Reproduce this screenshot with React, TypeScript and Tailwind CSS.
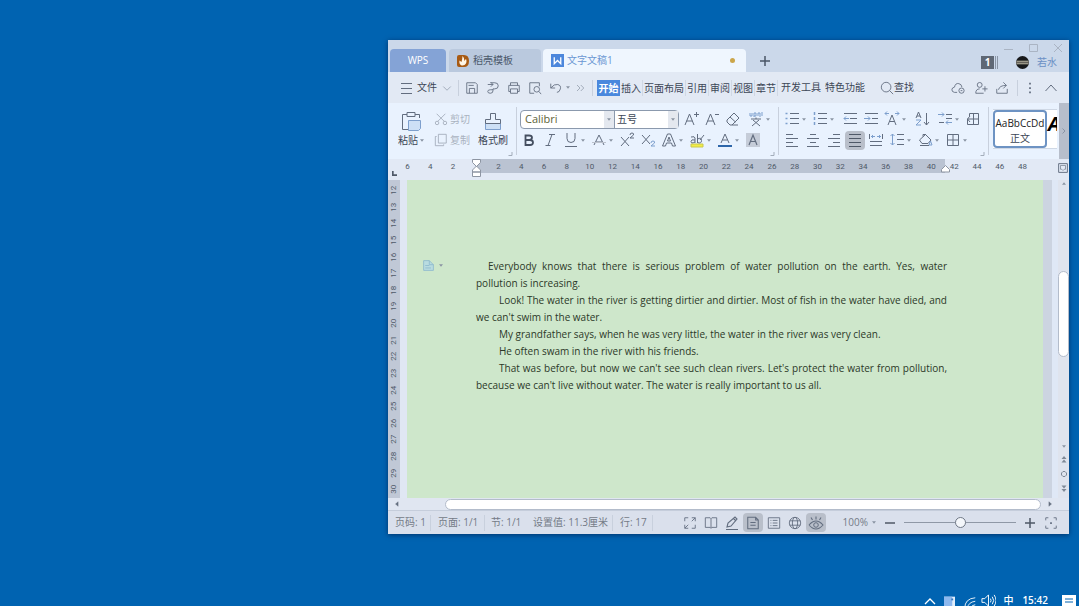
import type { ReactNode } from "react";

function Icon({ children, size = "size-4", tone = "text-[#626d7f]" }: { children: ReactNode; size?: string; tone?: string }) {
  return (
    <svg viewBox="0 0 16 16" className={`${size} ${tone} shrink-0`} fill="none" stroke="currentColor" strokeWidth="1" aria-hidden="true">
      {children}
    </svg>
  );
}

function Caret() {
  return (
    <svg viewBox="0 0 6 4" className="h-[3px] w-1 shrink-0 text-[#8a94a3]" fill="currentColor" aria-hidden="true">
      <path d="M0 0h6L3 4z" />
    </svg>
  );
}

function Tool({ label, children, menu = false, active = false }: { label: string; children: ReactNode; menu?: boolean; active?: boolean }) {
  return (
    <button type="button" aria-label={label} className={menu ? "flex h-5 w-7 shrink-0 items-center" : "flex h-5 w-[21px] shrink-0 items-center"}>
      <span className={active ? "flex h-[19px] w-5 items-center justify-center rounded-sm bg-[#b9bfca]" : "flex h-5 w-5 items-center justify-center"}>
        {children}
      </span>
      {menu && <Caret />}
    </button>
  );
}

function Divider({ tall = "h-4" }: { tall?: string }) {
  return <span className={`${tall} w-px shrink-0 bg-[#c8d0dd]`} />;
}

const blue = "#7d9fcd";

function TitleBar() {
  return (
    <header className="flex h-8 items-end bg-[#cbd8ea] pl-0.5">
      <nav className="flex min-w-0 items-end" aria-label="标签">
        <button type="button" className="h-[23px] w-14 rounded-t bg-[#84a3d6] text-white">WPS</button>
        <button type="button" className="ml-[3px] flex h-[23px] w-[92px] items-center gap-1 rounded-t bg-[#bac9de] pl-2 text-[#4b586b]">
          <svg viewBox="0 0 12 12" className="size-3" aria-hidden="true">
            <path d="M0 2Q0 0 2 0h5q5 0 5 6t-5 6H2q-2 0-2-2z" fill="#a85a12" />
            <path d="M5.500 1C7 3 7.500 4 7 6l2-2c1.500 3-.5 6.500-3.500 6.500C3 10.500 2 8 2.500 5.500L4.500 7C5 5 5.500 3 5.500 1z" fill="#fff6e6" />
          </svg>
          稻壳模板
        </button>
        <button type="button" className="ml-0.5 flex h-[23px] w-[203px] items-center gap-[3px] rounded-t bg-[#eff6fe] pl-2 pr-[11px] text-[#6b96d3]">
          <svg viewBox="0 0 12 12" className="size-[13px]" aria-hidden="true">
            <path d="M0 0h12v12H0z" fill="#4c87dc" />
            <path d="M3 3v6l3-3 3 3V3" fill="none" stroke="#fff" strokeWidth="1.200" />
          </svg>
          文字文稿1
          <span className="ml-auto size-[5px] rounded-full bg-[#cba64b]" />
        </button>
        <button type="button" aria-label="新建" className="ml-[9px] flex h-[23px] w-5 items-center justify-center">
          <Icon tone="text-[#4b5667]"><path d="M8 3v10M3 8h10" strokeWidth="1.500" /></Icon>
        </button>
      </nav>
      <div className="ml-auto flex h-8 flex-col items-end pr-[3px]">
        <div className="flex h-[15px] items-center gap-[9px]">
          <button type="button" aria-label="最小化"><Icon tone="text-[#aab4c3]"><path d="M4 9.500h9" /></Icon></button>
          <button type="button" aria-label="最大化"><Icon tone="text-[#aab4c3]"><path d="M4.500 4.500h8v7h-8z" /></Icon></button>
          <button type="button" aria-label="关闭"><Icon tone="text-[#aab4c3]"><path d="m4 4 8 8M12 4l-8 8" /></Icon></button>
        </div>
        <div className="flex h-[15px] items-center pr-[9px]">
          <span className="flex h-[13px] w-[13px] items-center justify-center bg-[#5f6875] font-bold text-white">1</span>
          <span className="ml-px h-[13px] w-[3px] border-x border-[#8a95a5]" />
          <svg viewBox="0 0 14 14" className="ml-[18px] size-[13px]" aria-hidden="true">
            <circle cx="7" cy="7" r="7" fill="#17191b" />
            <path d="M0.500 5h13v4H.5z" fill="#9a9788" />
            <path d="M1 7h12" stroke="#5e5c55" />
          </svg>
          <span className="ml-2 text-[#6b90c5]">若水</span>
        </div>
      </div>
    </header>
  );
}

const menus = ["插入", "页面布局", "引用", "审阅", "视图", "章节"];

function MenuBar() {
  return (
    <div className="flex h-[31px] items-center bg-[#e2e9f4] text-[#3c4656]">
      <button type="button" className="flex w-[70px] shrink-0 items-center pl-2.5">
        <Icon><path d="M3 3.500h11M3 8.500h11M3 13.500h11" /></Icon>
        <span className="ml-[3px]">文件</span>
        <Icon size="ml-1 size-3" tone="text-[#8d98a8]"><path d="m3 6 5 5 5-5" /></Icon>
      </button>
      <Divider />
      <div className="flex w-[133px] shrink-0 items-center pl-[3px]">
        <Tool label="保存"><Icon size="size-[14px]"><path d="M2 2h10l2 2v10H2zM4 5h6M5 14V8.500h6V14" /></Icon></Tool>
        <Tool label="输出"><Icon size="size-[14px]"><path d="M5 2h5q4 0 4 3.500T10 9H8M2 4h6M5.500 1.500 8 4 5.500 6.500M8 9v2q0 3-3 3t-3-2 3-2h3" /></Icon></Tool>
        <Tool label="打印"><Icon size="size-[14px]"><path d="M4 5V2h8v3M4 12H2V5h12v7h-2M4 9h8v5H4z" /></Icon></Tool>
        <Tool label="打印预览"><Icon size="size-[14px]"><path d="M7 14H2V2h11v4M15 15l-2.500-3" /><circle cx="10" cy="9.500" r="3.200" /></Icon></Tool>
        <Tool label="撤销" menu><Icon size="size-[14px]"><path d="M2 3v5h5M2 8q4-5 8-4t3 5-4 4" /></Icon></Tool>
        <button type="button" aria-label="更多"><Icon tone="text-[#8d98a8]" size="size-3"><path d="m4 4 4 4-4 4M9 4l4 4-4 4" /></Icon></button>
      </div>
      <Divider />
      <nav className="ml-1 flex shrink-0 items-center whitespace-nowrap" aria-label="菜单">
        <button type="button" className="h-4 w-[23px] bg-[#4a88dd] font-bold leading-4 text-white">开始</button>
        {menus.map((name) => (
          <button type="button" key={name} className="border-r border-[#d0d8e4] px-px leading-4">{name}</button>
        ))}
        <button type="button" className="pl-[3px]">开发工具</button>
        <button type="button" className="pl-1">特色功能</button>
      </nav>
      <button type="button" className="ml-[15px] flex shrink-0 items-center whitespace-nowrap">
        <Icon size="size-[14px]"><circle cx="7" cy="7" r="5.500" /><path d="m11 11 4 4" /></Icon>
        查找
      </button>
      <div className="ml-auto flex shrink-0 items-center pr-[7px]">
        <Tool label="云同步"><Icon size="size-[14px]"><path d="M7 13H4q-3-.5-3-3t3-3q1-5 5-4 3 .5 3.500 4" /><circle cx="12" cy="11" r="3" /><path d="M11 11h2" /></Icon></Tool>
        <span className="ml-0.5"><Tool label="协作"><Icon size="size-[14px]"><circle cx="6.500" cy="4.500" r="2.800" /><path d="M11 14H2q0-5 4.500-5M12.500 6v6M9.500 9h6" /></Icon></Tool></span>
        <Tool label="分享"><Icon size="size-[14px]"><path d="M2 9v5h12V9M4 10q1-5 9-5M9.500 1.500 13 5 9.500 8.500" /></Icon></Tool>
        <span className="ml-1 mr-0.5"><Divider tall="block h-4" /></span>
        <Tool label="更多选项"><Icon size="size-[14px]"><path d="M8 2v2M8 7v2M8 12v2" strokeWidth="2" /></Icon></Tool>
        <Tool label="收起功能区"><Icon size="size-4"><path d="m2.500 11 5.500-6 5.500 6" /></Icon></Tool>
      </div>
    </div>
  );
}

function ListIcon({ lead }: { lead: string }) {
  return <Icon><path d="M6 2.500h9M6 7.500h9M6 12.500h9" /><path d={lead} stroke={blue} strokeWidth="1.500" /></Icon>;
}

function Corner() {
  return <Icon size="absolute bottom-0.5 right-0.5 size-2" tone="text-[#a3adba]"><path d="M12 6v7H5" strokeWidth="2" /></Icon>;
}

function Ribbon() {
  return (
    <div className="flex h-14 overflow-hidden bg-[#e9f2fe] text-[#3c4656]">
      <div className="relative flex w-32 shrink-0 items-start pt-1.5">
        <button type="button" className="flex w-[46px] flex-col items-center">
          <svg viewBox="0 0 24 24" className="size-6" fill="none" stroke="#626d7f" aria-hidden="true">
            <path d="M8 5.500H3.500v15H9M16 5.500h4.500V9M8 3.500h8v4H8z" />
            <path d="M9.500 11.500h12v8l-2 2h-10z" fill="#cde0f6" stroke={blue} />
          </svg>
          <span className="mt-px flex items-center gap-0.5 leading-3">粘贴<Caret /></span>
        </button>
        <div className="flex w-9 flex-col gap-px text-[#aab3c0]">
          <button type="button" className="flex h-5 items-center whitespace-nowrap"><Icon size="size-[14px] mr-0.5" tone="text-[#a3adba]"><path d="m3 2 9 9M13 2 4 11" /><circle cx="3.500" cy="12.500" r="2" /><circle cx="12.500" cy="12.500" r="2" /></Icon>剪切</button>
          <button type="button" className="flex h-5 items-center whitespace-nowrap"><Icon size="size-[14px] mr-0.5" tone="text-[#a3adba]"><path d="M5 1.500h9v10H5zM3 4H1.500v10.500H11V13" /></Icon>复制</button>
        </div>
        <button type="button" className="ml-[5px] flex w-9 flex-col items-center whitespace-nowrap">
          <svg viewBox="0 0 24 24" className="size-6" fill="none" stroke="#626d7f" aria-hidden="true">
            <path d="M4.500 14.500h15v6h-15z" fill="#cde0f6" stroke={blue} />
            <path d="M4.500 14.500v-4h5v-6h5v6h5v4z" />
          </svg>
          <span className="mt-px leading-3">格式刷</span>
        </button>
        <Corner />
      </div>
      <Divider tall="my-1 h-12" />
      <div className="relative w-[261px] shrink-0 pl-0.5 pt-1.5">
        <div className="flex h-5 items-center">
          <div className="ml-px flex h-[19px] w-[159px] items-center rounded-sm border border-[#8b99ad] bg-white">
            <label className="relative flex h-full w-[94px] items-center border-r border-[#8b99ad]">
              <select aria-label="字体" defaultValue="Calibri" className="w-full appearance-none bg-transparent pl-1 text-[11px] leading-4 text-[#5e6338]"><option>Calibri</option></select>
              <span className="pointer-events-none absolute right-0 flex h-full w-2.5 items-center justify-center bg-[#e4e8ef]"><Caret /></span>
            </label>
            <label className="relative flex h-full flex-1 items-center">
              <select aria-label="字号" defaultValue="五号" className="w-full appearance-none bg-transparent pl-0.5 leading-4"><option>五号</option></select>
              <span className="pointer-events-none absolute right-0 flex h-full w-2.5 items-center justify-center bg-[#e4e8ef]"><Caret /></span>
            </label>
          </div>
          <div className="ml-0.5 flex">
            <Tool label="增大字号"><Icon><path d="m2 14 4.500-11L11 14M3.500 10h6M11 3.500h5M13.500 1v5" /></Icon></Tool>
            <Tool label="减小字号"><Icon><path d="m2 14 4.500-11L11 14M3.500 10h6M11 3.500h4" /></Icon></Tool>
            <Tool label="清除格式"><Icon><path d="m2 9 7-7 5 5-7 7H5L2 11zM5 6l5.500 5M7 14h6" /></Icon></Tool>
            <span className="ml-0.5"><Tool label="拼音指南" menu><Icon><path d="M2 2v3h2V2M6 6V2h2v3H6M10 5V2h2v4M14 1v4" stroke={blue} /><path d="M3 8h10M8 6.500V8M5 9l7 6M11 9l-7 6" /></Icon></Tool></span>
          </div>
        </div>
        <div className="mt-px flex h-5 items-center">
          <Tool label="加粗"><Icon tone="text-[#454f60]"><path d="M4.500 3.500H8q3 0 3 2T8.500 8H4.500zM4.500 8H9q3 0 3 2.500T9 13H4.500z" strokeWidth="1.800" /></Icon></Tool>
          <Tool label="倾斜"><Icon><path d="M7 2.500h6M10 2.500l-4 11M3.500 13.500h5" /></Icon></Tool>
          <Tool label="下划线" menu><Icon><path d="M4 1v5.500q0 4 4 4t4-4V1M2 14.500h12" /></Icon></Tool>
          <Tool label="删除线" menu><Icon><path d="M3 13 8 3l5 10M5 10h6" /><path d="M1 10.500h14" stroke="#bcc2cd" /></Icon></Tool>
          <Tool label="上标"><Icon><path d="m2 5 8 9M10 5l-8 9M11 3q0-2 2-2t1.500 2L11 6h4" /></Icon></Tool>
          <Tool label="下标"><Icon><path d="m2 3 8 9M10 3l-8 9" /><path d="M11 11q0-2 2-2t1.500 2L11 14h4" stroke={blue} /></Icon></Tool>
          <Tool label="文字效果" menu><Icon><path d="M1.500 14 6.500 2h3l5 12h-3l-1-3h-5l-1 3zM8 5 6.500 9h3z" /></Icon></Tool>
          <Tool label="突出显示" menu><Icon><path d="M2 12h12v3H2z" fill="#f3ed45" stroke="#c9c850" /><path d="M2 5q4-1 4 1v5M6 8q-4-1-4 1.500T6 10M8.500 2v9M8.500 7q4-2 4 1.500t-4 2M15 3l-4 5" /></Icon></Tool>
          <Tool label="字体颜色" menu><Icon><path d="M4 11 8 2l4 9M5.500 8h5" /><path d="M1 14h14" stroke="#2e66a9" strokeWidth="2" /></Icon></Tool>
          <Tool label="字符底纹"><Icon><path d="M1 1h14v14H1z" fill="#c5ccd8" stroke="none" /><path d="M4 13 8 3l4 10M5.500 9.500h5" strokeWidth="1.200" /></Icon></Tool>
        </div>
        <Corner />
      </div>
      <Divider tall="my-1 h-12" />
      <div className="relative w-[209px] shrink-0 pl-[3px] pt-1.5">
        <div className="flex h-5 items-center">
          <Tool label="项目符号" menu><ListIcon lead="M1.500 2.500h2M1.500 7.500h2M1.500 12.500h2" /></Tool>
          <Tool label="编号" menu><ListIcon lead="M2.500 1v3M2.500 6v3M2.500 11v3" /></Tool>
          <span className="ml-0.5"><Tool label="减少缩进"><Icon><path d="M2 2.500h13M8 7.500h7M2 12.500h13" /><path d="M7 7.500H2M4 5.500l-2 2 2 2" stroke={blue} /></Icon></Tool></span>
          <Tool label="增加缩进"><Icon><path d="M2 2.500h13M9 7.500h6M2 12.500h13" /><path d="M1 7.500h6M5 5.500l2 2-2 2" stroke={blue} /></Icon></Tool>
          <Tool label="中文版式" menu><Icon><path d="m4 14 4-10 4 10M5.500 10.500h5" /><path d="M5 2.500H1M3 .5 1 2.500l2 2M11 2.500h4M13 .5l2 2-2 2" stroke={blue} /></Icon></Tool>
          <span className="ml-0.5"><Tool label="排序"><Icon><path d="m2 7 2.500-6L7 7M3 5h3M12.500 2v12M10 11l2.500 3 2.500-3" /><path d="M2 9h5l-5 5h5" stroke={blue} /></Icon></Tool></span>
          <span className="ml-0.5"><Tool label="制表位" menu><Icon><path d="M9 3.500h6M2 11.500h5M9 7.500h6" /><path d="M1 3.500h6M5 1.500l2 2-2 2M15 11.500H9M11 9.500l-2 2 2 2" stroke={blue} /></Icon></Tool></span>
          <Tool label="表格工具"><Icon><path d="M4.500 5V2.500h9v11h-11V8h11M8.500 2.500v11M5 11 2.500 8 5 5" /></Icon></Tool>
        </div>
        <div className="mt-px flex h-5 items-center">
          <Tool label="左对齐"><Icon><path d="M2 2.500h7M2 6.500h12M2 10.500h7M2 14.500h12" /></Icon></Tool>
          <Tool label="居中"><Icon><path d="M5 2.500h6M2 6.500h12M5 10.500h6M2 14.500h12" /></Icon></Tool>
          <Tool label="右对齐"><Icon><path d="M7 2.500h7M2 6.500h12M7 10.500h7M2 14.500h12" /></Icon></Tool>
          <Tool label="两端对齐" active><Icon tone="text-[#4f5968]"><path d="M2 2.500h12M2 6.500h12M2 10.500h12M2 14.500h12" /></Icon></Tool>
          <Tool label="分散对齐"><Icon><path d="M1.500 2v5M14.500 2v5M2 9.500h12M2 13.500h12" /><path d="M3 4.500h4M5 3 3.500 4.500 5 6M13 4.500H9M11 3l1.500 1.500L11 6" stroke={blue} /></Icon></Tool>
          <Tool label="行距" menu><Icon><path d="M8 2.500h7M8 7.500h7M8 12.500h7" /><path d="M3.500 2v11M1.500 4l2-2 2 2M1.500 11l2 2 2-2" stroke={blue} /></Icon></Tool>
          <Tool label="底纹" menu><Icon><path d="m2.500 8 6-5.500L14 8l-3 3.500H5zM3 13.500h9M6 4.500V2.500h3" /><path d="m13.500 9 1.500 4h-3z" stroke={blue} /></Icon></Tool>
          <Tool label="边框" menu><Icon><path d="M2.500 2.500h11v11h-11zM8 2.500v11M2.500 8h11" /></Icon></Tool>
        </div>
        <Corner />
      </div>
      <Divider tall="my-1 h-12" />
      <div className="ml-1 mr-0.5 mt-1.5 flex h-10 min-w-0 flex-1 overflow-hidden border-y border-[#cfd8e5] bg-white">
        <button type="button" className="flex h-full w-[54px] shrink-0 flex-col items-center justify-between overflow-hidden rounded-sm border-2 border-[#6d93c3] pt-[3px]">
          <span className="whitespace-nowrap font-['Open_Sans',sans-serif] leading-4 text-[#222]">AaBbCcDd</span>
          <span className="leading-[15px]">正文</span>
        </button>
        <button type="button" aria-label="标题 1" className="flex items-start pl-px pt-0.5 font-['Open_Sans',sans-serif] text-xl font-bold italic leading-6 text-black">A</button>
      </div>
      <button type="button" aria-label="展开样式" className="flex w-2.5 shrink-0 items-center justify-center bg-[#b7becb]">
        <Icon size="size-2" tone="text-[#8a94a5]"><path d="m5 3 5 5-5 5" strokeWidth="2" /></Icon>
      </button>
    </div>
  );
}

const topMarks = [6, 4, 2, 0, ...Array.from({ length: 24 }, (_, i) => (i + 1) * 2)];
const sideMarks = Array.from({ length: 19 }, (_, i) => i + 12);

function Ruler() {
  return (
    <div className="relative flex h-[21px] items-start bg-[#e2e9f5] pl-2 font-['Roboto',sans-serif] text-[8px] text-[#4f5968]">
      <span className="absolute left-[88px] top-0 h-3.5 w-[469px] bg-[#bac3d2]" />
      <svg viewBox="0 0 6 6" className="absolute left-1 top-3 size-[5px]" fill="none" stroke="#4f5968" strokeWidth="2" aria-hidden="true"><path d="M1 0v5h5" /></svg>
      <div className="relative flex w-[638px] shrink-0">
        {topMarks.map((n, i) => (
          <span key={i} className="h-3.5 flex-1 text-center leading-4">{n === 0 ? "" : n}</span>
        ))}
      </div>
      <svg viewBox="0 0 9 18" className="absolute left-[84px] top-0 h-[18px] w-[9px]" fill="#fff" stroke="#8d95a2" aria-hidden="true">
        <path d="M.5.5h8v3l-4 4-4-4zM.5 13v-2l4-4 4 4v2zM.5 13h8v4.500h-8z" />
      </svg>
      <svg viewBox="0 0 9 8" className="absolute left-[553px] top-[6px] h-2 w-[9px]" fill="#fff" stroke="#8d95a2" aria-hidden="true"><path d="M.5 7V4.500l4-4 4 4V7z" /></svg>
      <span className="absolute right-px top-1 flex size-[10px]"><Icon size="size-[10px]"><path d="M1 1h14v14H1z" strokeWidth="1.500" /><path d="M4 4v6h2l2 2 2-2h2V4z" /></Icon></span>
    </div>
  );
}

const lines = [
  { text: "Everybody knows that there is serious problem of water pollution on the earth. Yes, water", pad: "pl-3", full: true },
  { text: "pollution is increasing.", pad: "", full: false },
  { text: "Look! The water in the river is getting dirtier and dirtier. Most of fish in the water have died, and", pad: "pl-[23px]", full: true },
  { text: "we can't swim in the water.", pad: "", full: false },
  { text: "My grandfather says, when he was very little, the water in the river was very clean.", pad: "pl-[23px]", full: false },
  { text: "He often swam in the river with his friends.", pad: "pl-[23px]", full: false },
  { text: "That was before, but now we can't see such clean rivers. Let's protect the water from pollution,", pad: "pl-[23px]", full: true },
  { text: "because we can't live without water. The water is really important to us all.", pad: "", full: false },
];

function Workspace() {
  return (
    <div className="flex h-[318px]">
      <div className="flex w-3 shrink-0 flex-col overflow-hidden bg-[#c0c8d6] pt-0.5 font-['Roboto',sans-serif] text-[8px] text-[#4f5968]">
        {sideMarks.map((n) => (
          <span key={n} className="flex min-h-0 flex-1 rotate-180 items-center justify-center leading-3 [writing-mode:vertical-rl]">{n}</span>
        ))}
      </div>
      <div className="w-[7px] shrink-0 bg-[#e0e7f3]" />
      <main className="flex min-w-0 flex-1 items-start bg-[#cee7cb] pt-[78px]">
        <div className="flex w-[69px] shrink-0 items-center gap-1 pl-[15px] pt-px">
          <Icon size="size-[13px]" tone="text-[#8bb7cc]"><path d="M2 2h7l5 5v7H2z" fill="#b9dce0" /><path d="M9 2v5h5M4 8h5M4 11h7" /></Icon>
          <Caret />
        </div>
        <div className="w-[471px] shrink-0 whitespace-nowrap font-['Open_Sans',sans-serif] text-[10px] leading-[17px] text-[#2c3828]">
          {lines.map((line) => (
            <p key={line.text} className={`${line.pad} ${line.full ? "[text-align-last:justify]" : ""}`}>{line.text}</p>
          ))}
        </div>
      </main>
      <div className="w-[9px] shrink-0 bg-[#ccd4e1]" />
      <div className="w-1.5 shrink-0 bg-[#dfe8f6]" />
      <div className="flex w-[11px] shrink-0 flex-col items-center bg-[#dfe4ee]">
        <div className="flex h-[91px] flex-col pt-0.5">
          <span className="rotate-180"><Caret /></span>
        </div>
        <div className="h-[86px] w-[11px] rounded-full border border-[#b3bccb] bg-white" />
        <div className="mt-auto flex w-[11px] flex-col items-center gap-[7px] pb-[5px]">
          <Caret />
          <Icon size="size-2" tone="text-[#7f8997]"><path d="m3 8 5-6 5 6zM3 15l5-6 5 6z" fill="currentColor" stroke="none" /></Icon>
          <Icon size="size-2" tone="text-[#7f8997]"><path d="M6 3h4l3 3v4l-3 3H6l-3-3V6z" strokeWidth="2" /></Icon>
          <Icon size="size-2" tone="text-[#7f8997]"><path d="m3 1 5 6 5-6zM3 8l5 6 5-6z" fill="currentColor" stroke="none" /></Icon>
        </div>
      </div>
    </div>
  );
}

function StatusBar() {
  return (
    <footer className="flex h-6 items-center whitespace-nowrap border-t border-[#c5cddb] bg-[#dae0ec] text-[#747b87]">
      <span className="w-[42px] pl-[7px]">页码: 1</span><Divider />
      <span className="w-[53px] pl-[7px]">页面: 1/1</span><Divider />
      <span className="w-[42px] pl-1.5">节: 1/1</span>
      <span className="w-[85px] pl-1.5">设置值: 11.3厘米</span><Divider />
      <span className="w-[39px] pl-[7px]">行: 17</span><Divider />
      <div className="ml-auto flex items-center">
        <Tool label="全屏显示"><Icon size="size-[14px]"><path d="M2 6V2h4M10 2h4v4M14 10v4h-4M6 14H2v-4M10 6l4-4M2 14l4-4" /></Icon></Tool>
        <Tool label="阅读版式"><Icon size="size-[14px]"><path d="M1.500 2h5.500l1 1 1-1h5.500v11H9l-1 1-1-1H1.500zM8 3v11" /></Icon></Tool>
        <Tool label="写作模式"><Icon><path d="m3 12 1-4 7-6 2 2-6 7zM9.500 3.500l2 2M2 14.500h12" strokeWidth="1.100" /></Icon></Tool>
        <Tool label="页面视图" active><Icon size="size-[14px]"><path d="M2 1.500h9l3 3v10H2zM11 1.500v3h3M5 7.500h6M5 10.500h6" strokeWidth="1.200" /></Icon></Tool>
        <Tool label="大纲"><Icon size="size-[14px]"><path d="M1.500 2h13v12h-13zM6.500 5H12M6.500 8H12M6.500 11H12M4 5h1M4 8h1M4 11h1" /></Icon></Tool>
        <Tool label="Web 版式"><Icon size="size-[14px]"><circle cx="8" cy="8" r="6.500" /><ellipse cx="8" cy="8" rx="3" ry="6.500" /><path d="M2 5.500h12M2 10.500h12" /></Icon></Tool>
        <Tool label="护眼模式" active><Icon><path d="M1 10q7-8 14 0-7 8-14 0M8 4.500V1.500M4.500 5 3 2.500M11.500 5 13 2.500" strokeWidth="1.100" /><circle cx="8" cy="10" r="2.300" /></Icon></Tool>
      </div>
      <button type="button" className="ml-4 flex items-center gap-1"><span className="text-[10px]">100%</span><Caret /></button>
      <button type="button" aria-label="缩小" className="ml-1.5"><Icon tone="text-[#4f5866]"><path d="M3 8h10" strokeWidth="1.500" /></Icon></button>
      <input type="range" aria-label="缩放比例" min="0" max="200" defaultValue="100" className="ml-1.5 h-4 w-28 appearance-none bg-transparent [&::-webkit-slider-runnable-track]:h-px [&::-webkit-slider-runnable-track]:bg-[#8f98a6] [&::-webkit-slider-thumb]:-mt-[5px] [&::-webkit-slider-thumb]:size-[11px] [&::-webkit-slider-thumb]:appearance-none [&::-webkit-slider-thumb]:rounded-full [&::-webkit-slider-thumb]:border [&::-webkit-slider-thumb]:border-[#6f7886] [&::-webkit-slider-thumb]:bg-[#f4f7fb]" />
      <button type="button" aria-label="放大" className="ml-1.5"><Icon tone="text-[#4f5866]"><path d="M3 8h10M8 3v10" strokeWidth="1.500" /></Icon></button>
      <button type="button" aria-label="适合页面" className="ml-1.5 mr-[11px]"><Icon size="size-[14px]"><path d="M2 5V2h3M11 2h3v3M14 11v3h-3M5 14H2v-3" /><path d="M7 8h2" strokeWidth="2" /></Icon></button>
    </footer>
  );
}

function TaskBar() {
  return (
    <div className="mt-auto flex h-[13px] shrink-0 items-start justify-end pr-[3px] text-white">
      <Icon tone="text-white"><path d="m3 11 5-5 5 5" strokeWidth="1.300" /></Icon>
      <svg viewBox="0 0 12 16" className="ml-1.5 mt-[3px] h-4 w-[11px]" aria-hidden="true"><path d="M0 0h12v16H0z" fill="#e2eefb" /><path d="M0 0h9v16H0z" fill="#8db8ee" /><path d="M8 2h2v2H8z" fill="#2f76bf" /></svg>
      <span className="ml-2 mt-[3px]"><Icon tone="text-white" size="size-[14px]"><path d="M2 14Q2 3 14 2M5 14Q6 7 14 6M9 14q1-4 5-4" /></Icon></span>
      <span className="ml-1"><Icon tone="text-white" size="size-[15px]"><path d="M1 6h3l4-4v12l-4-4H1zM10 6q1.500 2 0 4M12 4q3 4 0 8M14 2q4 6 0 12" /></Icon></span>
      <span className="ml-[7px] font-medium leading-[14px]">中</span>
      <span className="ml-[9px] font-semibold leading-[14px]">15:42</span>
      <svg viewBox="0 0 14 14" className="ml-3.5 mt-0.5 size-[14px]" aria-hidden="true"><path d="M0 0h14v12H9l-3 2v-2H0z" fill="#fff" /><path d="M3 4h8M3 7h8" stroke="#0063b1" /></svg>
    </div>
  );
}

export default function App() {
  return (
    <div className="flex h-screen flex-col overflow-hidden bg-[#0063b1] font-['Open_Sans','Noto_Sans_CJK_SC',sans-serif] text-[10px]">
      <section className="ml-[388px] mr-2.5 mt-10 min-w-[681px] shadow-[0_1px_5px_rgba(0,20,60,0.6)]" aria-label="文字文稿1">
        <TitleBar />
        <MenuBar />
        <Ribbon />
        <Ruler />
        <Workspace />
        <div className="flex h-3 items-center bg-[#e0e6f1] pl-1.5 pr-4">
          <Icon size="size-1.5"><path d="M11 2v12L4 8z" fill="currentColor" /></Icon>
          <div className="ml-[45px] mr-1.5 h-[11px] flex-1 rounded-full border border-[#b3bccb] bg-white" />
          <Icon size="size-1.5"><path d="M5 2v12l7-6z" fill="currentColor" /></Icon>
        </div>
        <StatusBar />
      </section>
      <TaskBar />
    </div>
  );
}
